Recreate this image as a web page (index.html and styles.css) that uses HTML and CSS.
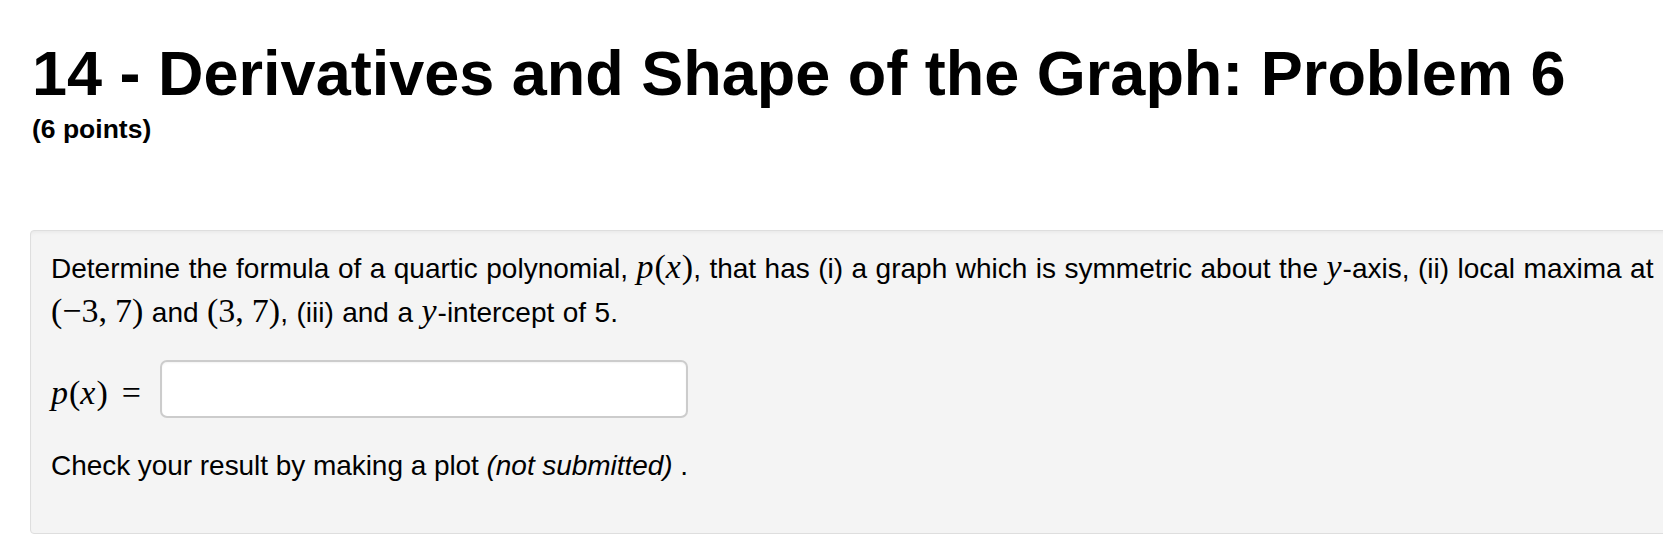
FILE: index.html
```html
<!DOCTYPE html>
<html lang="en">
<head>
<meta charset="utf-8">
<title>14 - Derivatives and Shape of the Graph: Problem 6</title>
<link rel="stylesheet" href="styles.css">
</head>
<body>
<header class="header">
  <h1 class="title">14 - Derivatives and Shape of the Graph: Problem 6</h1>
  <div class="points">(6 points)</div>
</header>
<section class="card">
  <p class="question">Determine the formula of a quartic polynomial, <span class="m"><i>p</i>(<i>x</i>)</span>, that has (i) a graph which is symmetric about the <span class="m"><i>y</i></span>-axis, (ii) local maxima at <span class="m">(−3,<span class="th"></span>7)</span> and <span class="m">(3,<span class="th"></span>7)</span>, (iii) and a <span class="m"><i>y</i></span>-intercept of 5.</p>
  <div class="answer-row">
    <span class="m label"><i>p</i>(<i>x</i>)<span class="eq">=</span></span>
    <input class="answer" type="text" aria-label="p(x)">
  </div>
  <p class="check">Check your result by making a plot <em>(not submitted)</em> .</p>
</section>
</body>
</html>
```
FILE: styles.css
```css
html, body {
  margin: 0;
  padding: 0;
  overflow: hidden;
  background: #ffffff;
}

body {
  font-family: "Liberation Sans", Arial, Helvetica, sans-serif;
  color: #000;
}

.header {
  padding: 37px 32px 0;
}

.title {
  margin: 0;
  font-size: 63px;
  line-height: 72px;
  font-weight: 700;
  letter-spacing: 0;
}

.points {
  margin-top: 5px;
  font-size: 26.5px;
  line-height: 30px;
  font-weight: 700;
}

.card {
  box-sizing: border-box;
  width: 1665px;
  margin: 86px 0 0 30px;
  padding: 16px 20px 45px 20px;
  background: #f4f4f4;
  border: 1px solid #dedede;
  border-radius: 4px;
  box-shadow: inset 0 3px 4px -2px rgba(0, 0, 0, 0.06);
  font-size: 28px;
  line-height: 44px;
}

.question {
  margin: 0 0 25px;
  max-width: 1640px;
  word-spacing: 0.7px;
}

.m {
  font-family: "Liberation Serif", "Times New Roman", serif;
  font-size: 34px;
  line-height: 1;
  white-space: nowrap;
  word-spacing: 0;
}

.m i {
  font-style: italic;
  padding-right: 1px;
}

.th {
  display: inline-block;
  width: 8px;
}

.answer-row {
  display: flex;
  align-items: center;
  gap: 17px;
  margin: 0 0 26px;
}

.label {
  position: relative;
  top: 4px;
}

.eq {
  margin-left: 14px;
  margin-right: 2px;
  font-style: normal;
}

.answer {
  box-sizing: border-box;
  width: 528px;
  height: 58px;
  margin: 0;
  background: #ffffff;
  border: 2px solid #cccccc;
  border-radius: 7px;
  box-shadow: inset 0 1px 2px rgba(0, 0, 0, 0.05);
  font-size: 28px;
  padding: 0 12px;
}

.check {
  margin: 0;
  letter-spacing: -0.05px;
}

.check em {
  font-style: italic;
}
```
